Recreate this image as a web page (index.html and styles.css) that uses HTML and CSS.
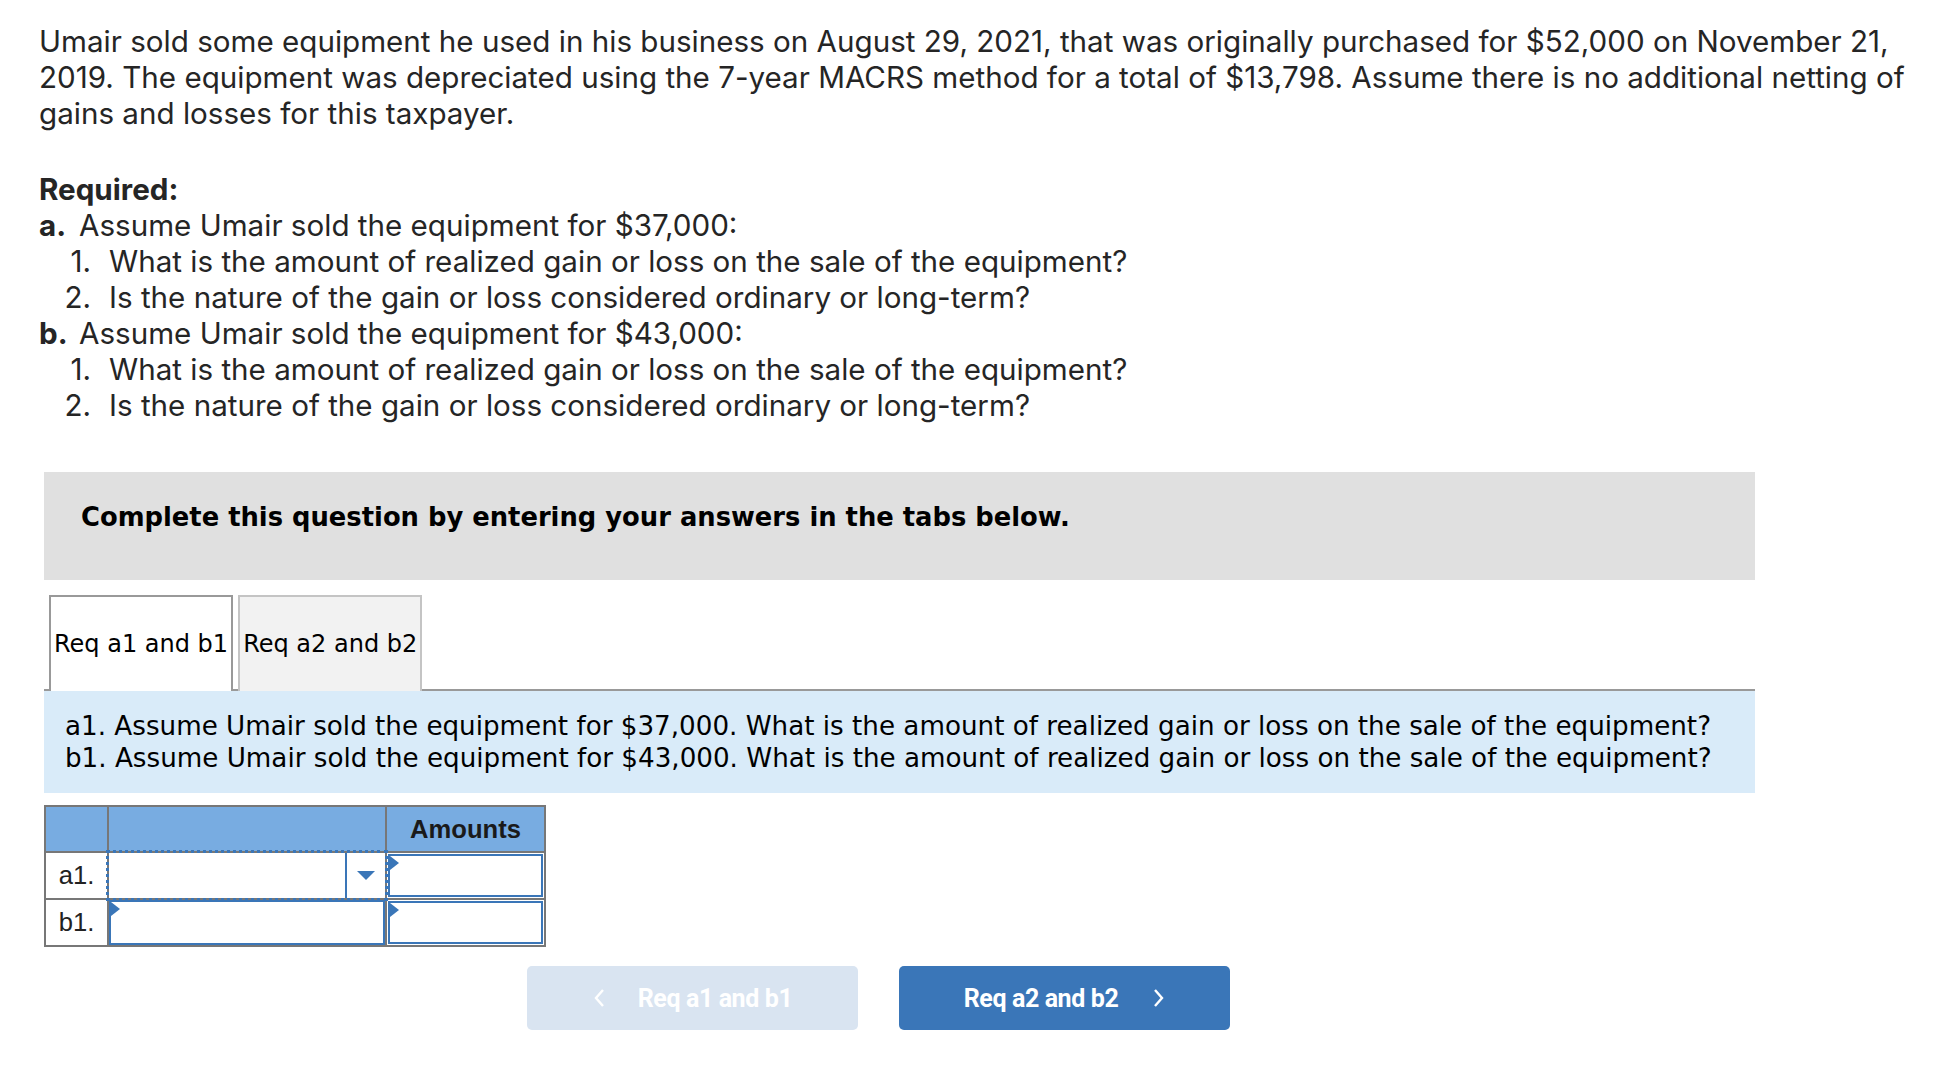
FILE: index.html
```html
<!DOCTYPE html>
<html lang="en">
<head>
  <meta charset="UTF-8" />
  <meta name="viewport" content="width=device-width, initial-scale=1.0" />
  <title>Question</title>
  <link rel="stylesheet" href="styles.css">
</head>
<body>
  <div class="question">
    <p class="intro">Umair sold some equipment he used in his business on August 29, 2021, that was originally purchased for $52,000 on November 21, 2019. The equipment was depreciated using the 7-year MACRS method for a total of $13,798. Assume there is no additional netting of gains and losses for this taxpayer.</p>

    <div class="required">
      <div class="req-title">Required:</div>
      <div class="part">
        <span class="part-mark">a.</span>
        <div class="part-body">
          <div>Assume Umair sold the equipment for $37,000:</div>
          <ol class="sub">
            <li><span class="num">1.</span><span>What is the amount of realized gain or loss on the sale of the equipment?</span></li>
            <li><span class="num">2.</span><span>Is the nature of the gain or loss considered ordinary or long-term?</span></li>
          </ol>
        </div>
      </div>
      <div class="part">
        <span class="part-mark">b.</span>
        <div class="part-body">
          <div>Assume Umair sold the equipment for $43,000:</div>
          <ol class="sub">
            <li><span class="num">1.</span><span>What is the amount of realized gain or loss on the sale of the equipment?</span></li>
            <li><span class="num">2.</span><span>Is the nature of the gain or loss considered ordinary or long-term?</span></li>
          </ol>
        </div>
      </div>
    </div>

    <div class="notice">Complete this question by entering your answers in the tabs below.</div>

    <div class="tabs">
      <button class="tab active">Req a1 and b1</button>
      <button class="tab">Req a2 and b2</button>
    </div>

    <div class="prompt">
      a1. Assume Umair sold the equipment for $37,000. What is the amount of realized gain or loss on the sale of the equipment?<br>
      b1. Assume Umair sold the equipment for $43,000. What is the amount of realized gain or loss on the sale of the equipment?
    </div>

    <table class="answers">
      <tr>
        <th class="c-label"></th>
        <th class="c-desc"></th>
        <th class="c-amt">Amounts</th>
      </tr>
      <tr class="row-a">
        <td class="c-label">a1.</td>
        <td class="c-desc">
          <div class="select focus">
            <span class="select-value"></span>
            <span class="select-arrow"></span>
          </div>
        </td>
        <td class="c-amt"><div class="field"></div></td>
      </tr>
      <tr class="row-b">
        <td class="c-label">b1.</td>
        <td class="c-desc"><div class="field"></div></td>
        <td class="c-amt"><div class="field"></div></td>
      </tr>
    </table>

    <div class="nav">
      <button class="nav-btn disabled">
        <svg class="chev" viewBox="0 0 12 20" width="12" height="20"><path d="M10 2 L3 10 L10 18" fill="none" stroke="currentColor" stroke-width="2.4"/></svg>
        <span>Req a1 and b1</span>
      </button>
      <button class="nav-btn">
        <span>Req a2 and b2</span>
        <svg class="chev" viewBox="0 0 12 20" width="12" height="20"><path d="M2 2 L9 10 L2 18" fill="none" stroke="currentColor" stroke-width="2.4"/></svg>
      </button>
    </div>
  </div>
</body>
</html>
```

FILE: styles.css
```css
:root {
  --text: #252525;
  --notice-bg: #e0e0e0;
  --prompt-bg: #d9ebf9;
  --head-bg: #78ace1;
  --grid: #777777;
  --blue: #3a76b8;
  --blue-light: #d9e4f1;
}
* { box-sizing: border-box; margin: 0; padding: 0; }
body {
  background: #ffffff;
  color: var(--text);
  font-family: Inter, 'Open Sans', sans-serif;
}
.question {
  padding: 23px 20px 40px 39px;
}
.intro, .required {
  font-size: 29.6px;
  line-height: 36px;
}
.required { margin-top: 40px; }
.req-title { font-weight: 700; }
.part { display: flex; }
.part-mark {
  flex: none;
  font-weight: 700;
  width: 40px;
}
.sub { list-style: none; }
.sub li { display: flex; }
.sub .num {
  flex: none;
  width: 30px;
  margin-left: -18px;
  margin-right: 18px;
  text-align: right;
}

.notice {
  margin: 49px 176px 0 5px;
  height: 108px;
  padding: 30px 37px;
  background: var(--notice-bg);
  font-family: Verdana, 'DejaVu Sans', sans-serif;
  font-weight: 700;
  font-size: 25.8px;
  line-height: 30px;
  color: #000000;
}

.tabs {
  display: flex;
  gap: 5px;
  margin: 15px 176px 0 5px;
  padding-left: 5px;
  border-bottom: 2px solid #999999;
}
.tab {
  height: 96px;
  margin-bottom: -2px;
  padding: 0 3px;
  font-family: Verdana, 'DejaVu Sans', sans-serif;
  font-size: 24px;
  color: #000000;
  background: #f2f2f2;
  border: 2px solid #c4c4c4;
  border-bottom: none;
}
.tab.active {
  background: #ffffff;
  border-color: #999999;
}

.prompt {
  margin: 0 176px 0 5px;
  padding: 19px 21px 19px;
  background: var(--prompt-bg);
  font-family: Verdana, 'DejaVu Sans', sans-serif;
  font-size: 26.2px;
  line-height: 32px;
  color: #000000;
}

.answers {
  margin: 12px 0 0 5px;
  border-collapse: collapse;
  border: 2px solid var(--grid);
  font-family: 'Liberation Sans', Arial, sans-serif;
}
.answers th, .answers td {
  border: 2px solid var(--grid);
  padding: 0;
}
.answers th {
  height: 46px;
  background: var(--head-bg);
  font-size: 25.6px;
  font-weight: 700;
  color: #1a1a1a;
}
.answers td {
  height: 47px;
  background: #ffffff;
}
.answers td.c-label {
  font-size: 25.6px;
  text-align: center;
  color: #222222;
}
.c-label { width: 63px; }
.c-desc { width: 278px; }
.c-amt { width: 159px; }

.field {
  position: relative;
  height: 43px;
  margin: 1px;
  border: 2px solid var(--blue);
}
.c-desc .field { margin: 0; height: 45px; }
.field::before {
  content: "";
  position: absolute;
  left: 0;
  top: 0;
  border-left: 9px solid var(--blue);
  border-top: 7px solid transparent;
  border-bottom: 7px solid transparent;
}
.select {
  display: flex;
  height: 45px;
  outline: 3px dotted var(--blue);
  outline-offset: 0;
}
.select-value { flex: 1; border-right: 2px solid var(--blue); }
.select-arrow {
  width: 38px;
  display: flex;
  align-items: center;
  justify-content: center;
}
.select-arrow::after {
  content: "";
  border-top: 9px solid var(--blue);
  border-left: 9px solid transparent;
  border-right: 9px solid transparent;
}

.nav {
  display: flex;
  gap: 41px;
  margin: 19px 0 0 488px;
}
.nav-btn {
  display: flex;
  align-items: center;
  justify-content: center;
  gap: 35px;
  width: 331px;
  height: 64px;
  border: none;
  border-radius: 5px;
  background: var(--blue);
  color: #ffffff;
  font-family: Roboto, sans-serif;
  font-weight: 700;
  font-size: 25px;
  letter-spacing: -0.4px;
  cursor: pointer;
}
.nav-btn.disabled {
  background: var(--blue-light);
  cursor: default;
  gap: 33px;
}
```
